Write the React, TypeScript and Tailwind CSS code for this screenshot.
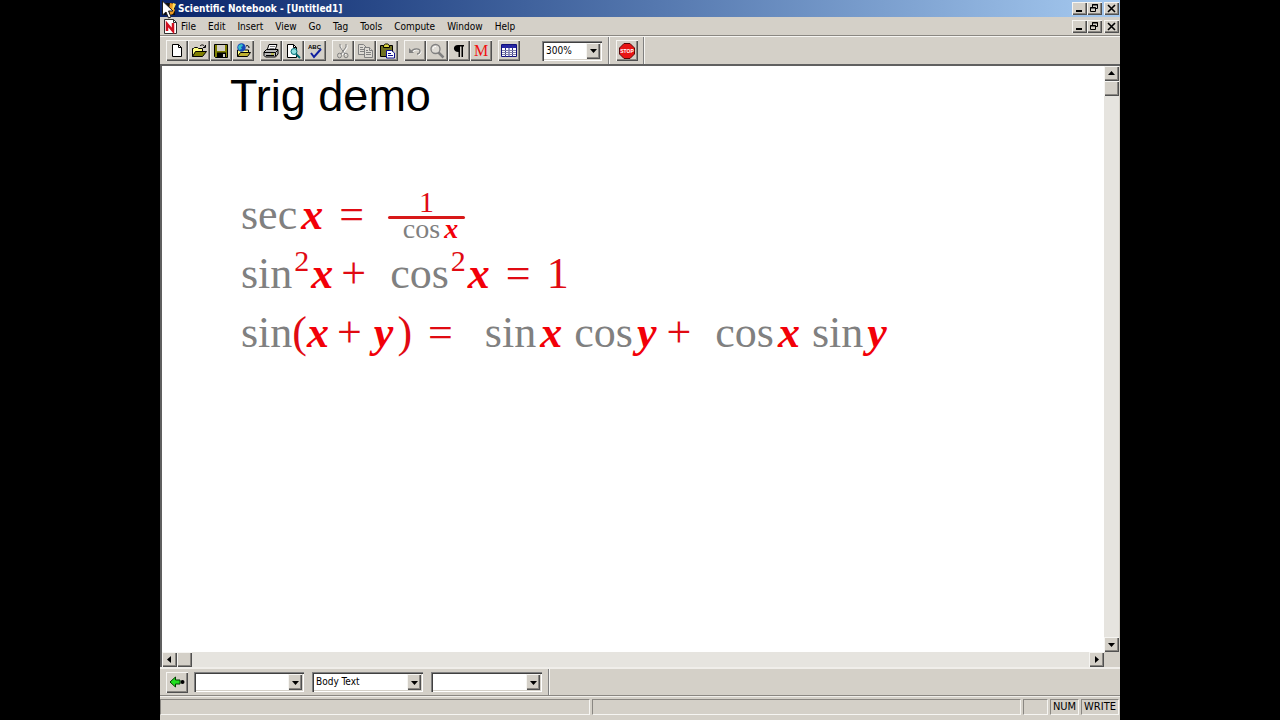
import type { ReactNode } from "react";

const raised =
  "bg-[#d4d0c8] shadow-[inset_1px_1px_0_#f6f5f2,inset_-1px_-1px_0_#505050,inset_-2px_-2px_0_#8a8782]";

const menus = ["File", "Edit", "Insert", "View", "Go", "Tag", "Tools", "Compute", "Window", "Help"];

function Icon({ children }: { children: ReactNode }) {
  return (
    <svg viewBox="0 0 16 16" className="h-4 w-4" aria-hidden="true">
      {children}
    </svg>
  );
}

function ToolButton({ label, children }: { label: string; children: ReactNode }) {
  return (
    <button aria-label={label} className={`flex h-[21px] w-[22px] items-center justify-center ${raised}`}>
      {children}
    </button>
  );
}

function Arrow({ dir }: { dir: "up" | "down" | "left" | "right" }) {
  const points = {
    up: "1,6 8,6 4.5,2",
    down: "1,3 8,3 4.5,7",
    left: "6,1 6,8 2,4.5",
    right: "3,1 3,8 7,4.5",
  };
  return (
    <svg viewBox="0 0 9 9" className="h-[9px] w-[9px]" aria-hidden="true">
      <polygon points={points[dir]} />
    </svg>
  );
}

function ScrollButton({ label, dir }: { label: string; dir: "up" | "down" | "left" | "right" }) {
  return (
    <button aria-label={label} className={`flex h-[15px] w-[15px] shrink-0 items-center justify-center ${raised}`}>
      <Arrow dir={dir} />
    </button>
  );
}

function Combo({ label, value, width }: { label: string; value: string; width: string }) {
  return (
    <div
      className={`relative flex h-5 items-center bg-white ${width} shadow-[inset_1px_1px_0_#808080,inset_2px_2px_0_#404040,inset_-1px_-1px_0_#fff,inset_-2px_-2px_0_#d4d0c8]`}
    >
      <select aria-label={label} className="h-full w-full appearance-none bg-transparent pl-1 outline-none">
        <option>{value}</option>
      </select>
      <span className={`pointer-events-none absolute right-[2px] flex h-4 w-[14px] items-center justify-center ${raised}`}>
        <Arrow dir="down" />
      </span>
    </div>
  );
}

function WindowButtons() {
  const box = `flex h-[13px] w-[15px] items-center justify-center ${raised}`;
  return (
    <div className="ml-auto flex pr-px">
      <button aria-label="Minimize" className={box}>
        <svg viewBox="0 0 11 9" className="h-[9px] w-[11px]">
          <path d="M2 6h6v2H2z" />
        </svg>
      </button>
      <button aria-label="Restore" className={box}>
        <svg viewBox="0 0 11 9" className="h-[9px] w-[11px]" fill="none" stroke="#000">
          <path d="M3.5 3V.5h5v4H7M3 1h6M1.5 3.5h5v4h-5zM1 4h6" />
        </svg>
      </button>
      <button aria-label="Close" className={`ml-[2px] ${box}`}>
        <svg viewBox="0 0 11 9" className="h-[9px] w-[11px]" stroke="#000" strokeWidth="1.6">
          <path d="M2 1l7 7M9 1L2 8" />
        </svg>
      </button>
    </div>
  );
}

function Divider() {
  return <div className="w-[2px] self-stretch border-l border-[#808080] bg-[#f6f5f2]" />;
}

function Toolbar() {
  return (
    <div className="flex h-[28px] items-center border-t border-[#f6f5f2] pl-[6px]">
      <div className="flex">
        <ToolButton label="New">
          <Icon>
            <path d="M3.5 1.5h6l3 3v9h-9z" fill="#fff" stroke="#000" />
            <path d="M9.5 1.5v3h3" fill="none" stroke="#000" />
          </Icon>
        </ToolButton>
        <ToolButton label="Open">
          <Icon>
            <path d="M1.5 13.5v-8h1l1-1h3l1 1h4v3" fill="#ffff80" stroke="#000" />
            <path d="M1.5 13.5l3-5h11l-4 5z" fill="#808000" stroke="#000" />
            <path d="M9 3c2-2 4-1 5 1M14.5 2v2.5H12" fill="none" stroke="#000" />
          </Icon>
        </ToolButton>
        <ToolButton label="Save">
          <Icon>
            <path d="M1.5 1.5h13v13h-12l-1-1z" fill="#808000" stroke="#000" />
            <path d="M4 2h8v6H4z" fill="#d4d0c8" />
            <path d="M4 9.5h9V15H4z" />
            <path d="M10 11h2v3h-2z" fill="#d4d0c8" />
          </Icon>
        </ToolButton>
        <ToolButton label="Open from web">
          <Icon>
            <path d="M2.5 13.5V7h2l1-1h3l1 1h4v2" fill="#ffff80" stroke="#000" />
            <circle cx="6.5" cy="4.5" r="4.2" fill="#1747b8" />
            <path d="M4 2l3-1 1 2-2 1 1 2-3 1-1-3z" fill="#35c0c8" />
            <path d="M2.5 13.5l3-4h10l-3 4z" fill="#c0b030" stroke="#000" />
            <path d="M11 3c2-1 3 0 3 2" fill="none" stroke="#000" />
          </Icon>
        </ToolButton>
      </div>

      <div className="ml-[6px] flex">
        <ToolButton label="Print">
          <Icon>
            <path d="M4 7.5l2-6h8l-2 6z" fill="#fff" stroke="#000" />
            <path d="M7 3.5h5M6.5 5.5h5" stroke="#808080" />
            <path d="M1 9l2.5-2.500H15V11l-2.500 3H2.500L1 12.500z" fill="#b8b8b8" stroke="#000" />
            <path d="M1 9.5h11.500V13M12.500 9.500L15 7" fill="none" stroke="#000" />
            <path d="M3 12.500h8" stroke="#000" />
            <path d="M8 11h3" stroke="#c0c000" />
          </Icon>
        </ToolButton>
        <ToolButton label="Preview">
          <Icon>
            <path d="M2.5 1.5h6l3 3v10h-9z" fill="#fff" stroke="#000" />
            <path d="M8.5 1.5v3h3" fill="none" stroke="#000" />
            <circle cx="9" cy="8.5" r="3" fill="#8fe0e0" stroke="#006a70" />
            <path d="M11 11l4 4" stroke="#006a70" strokeWidth="2" />
          </Icon>
        </ToolButton>
        <ToolButton label="Spelling">
          <Icon>
            <text x="1" y="6" fontSize="6" fontWeight="bold" fontFamily="Liberation Sans, sans-serif">
              ABC
            </text>
            <path d="M4 10l3 4 7-8" fill="none" stroke="#1020a0" strokeWidth="2" />
          </Icon>
        </ToolButton>
      </div>

      <div className="ml-[6px] flex">
        <ToolButton label="Cut">
          <Icon>
            <path d="M5 1v3l5 7M11 1v3l-5 7" fill="none" stroke="#fff" transform="translate(1 1)" />
            <g fill="none" stroke="#808080">
              <path d="M5 1v3l5 7M11 1v3l-5 7" />
              <ellipse cx="4.5" cy="12.5" rx="2" ry="2.3" />
              <ellipse cx="11" cy="12.5" rx="2" ry="2.3" />
            </g>
          </Icon>
        </ToolButton>
        <ToolButton label="Copy">
          <Icon>
            <g fill="#dedbd5" stroke="#808080">
              <path d="M1.5 1.5h5l3 3v7h-8z" />
              <path d="M3 4.5h3M3 6.5h4M3 8.5h4" />
              <path d="M7.5 4.5h5l3 3v7h-8z" />
              <path d="M12.5 4.5v3h3M9 7.5h2M9 9.5h5M9 11.5h5" />
            </g>
          </Icon>
        </ToolButton>
        <ToolButton label="Paste">
          <Icon>
            <path d="M1.5 2.5h12v11h-12z" fill="#707020" stroke="#000" />
            <path d="M4.5 4.5v-2l2-1.5h2l2 1.5v2z" fill="#e0d840" stroke="#000" />
            <path d="M7.5 7.5h5l3 2.5v5h-8z" fill="#fff" stroke="#101090" />
            <path d="M9 10.5h3M9 12.5h5" stroke="#101090" />
          </Icon>
        </ToolButton>
      </div>

      <div className="ml-[6px] flex">
        <ToolButton label="Undo">
          <Icon>
            <path d="M4 9c2-4 9-4 9-1 0 2-2 3-3 3" fill="none" stroke="#fff" transform="translate(1 1)" />
            <path d="M4 9c2-4 9-4 9-1 0 2-2 3-3 3" fill="none" stroke="#808080" strokeWidth="1.3" />
            <path d="M2 5v5h5z" fill="#808080" />
          </Icon>
        </ToolButton>
        <ToolButton label="Zoom">
          <Icon>
            <circle cx="6.5" cy="6" r="4.5" fill="#dedbd5" stroke="#808080" strokeWidth="1.3" />
            <path d="M4 6c0-2 1-2.5 3-2.5" fill="none" stroke="#fff" />
            <path d="M9.5 9.5l5 5" stroke="#808080" strokeWidth="2.5" />
          </Icon>
        </ToolButton>
        <ToolButton label="Show nonprinting">
          <Icon>
            <path d="M7 2h6v1.5h-1V14h-1.500V3.500H9V14H7.500V9C1.500 9 1.500 2 7 2z" />
          </Icon>
        </ToolButton>
        <ToolButton label="Toggle math/text">
          <span className="font-['Liberation_Serif',serif] text-[16px] leading-4 text-[#f01010]">M</span>
        </ToolButton>
      </div>

      <div className="ml-[6px] flex">
        <ToolButton label="Table">
          <Icon>
            <path d="M.5 1.5h15v12H.5z" fill="#fff" stroke="#10107a" />
            <path d="M1 2h14v3H1z" fill="#2424a8" />
            <path d="M4.5 2v12M8 2v12M11.5 2v12" stroke="#303090" />
            <path d="M1 7.5h14M1 9.5h14M1 11.5h14" stroke="#8080a8" />
          </Icon>
        </ToolButton>
      </div>

      <div className="mr-[6px] ml-[22px]">
        <Combo label="Zoom" value="300%" width="w-[60px]" />
      </div>
      <Divider />
      <div className="mr-[5px] ml-[6px]">
        <ToolButton label="Stop">
          <Icon>
            <path d="M5 .5h6L15.5 5v6L11 15.5H5L.5 11V5z" fill="#e81414" stroke="#5a0808" />
            <text
              x="8"
              y="10"
              fontSize="5"
              fontWeight="bold"
              textAnchor="middle"
              fill="#fff"
              fontFamily="Liberation Sans, sans-serif"
            >
              STOP
            </text>
          </Icon>
        </ToolButton>
      </div>
      <Divider />
    </div>
  );
}

/* Red italic variable */
function V({ children, gap = "ml-1" }: { children: string; gap?: string }) {
  return <i className={`font-bold text-[#f20008] ${gap}`}>{children}</i>;
}

/* Gray function name */
function Fn({ children, gap = "" }: { children: string; gap?: string }) {
  return <span className={`text-[#808080] ${gap}`}>{children}</span>;
}

function Op({ children, gap = "ml-4" }: { children: string; gap?: string }) {
  return <span className={gap}>{children}</span>;
}

function Sq() {
  return <sup className="top-0 ml-[2px] align-[17px] text-[30px] leading-none">2</sup>;
}

function Document() {
  return (
    <main className="min-w-0 flex-1 overflow-hidden bg-white pl-[68px]">
      <h1 className="pt-1 font-['Liberation_Sans',sans-serif] text-[45px] leading-[52px] text-black">Trig demo</h1>
      <div className="mt-16 pl-[11px] font-['Liberation_Serif',serif] text-[44px] leading-[58px] whitespace-nowrap text-[#e00a12]">
        <p className="h-[59px]">
          <Fn>sec</Fn>
          <V>x</V>
          <Op>=</Op>
          <span className="ml-6 inline-flex w-[77px] flex-col items-center align-[17px]">
            <span className="text-[30px] leading-7">1</span>
            <span className="h-[3px] w-full rounded-full bg-[#d81818]" />
            <span className="text-[28px] leading-5">
              <Fn gap="ml-2">cos</Fn>
              <V>x</V>
            </span>
          </span>
        </p>
        <p className="h-[59px]">
          <Fn>sin</Fn>
          <Sq />
          <V gap="ml-[2px]">x</V>
          <Op gap="ml-2">+</Op>
          <Fn gap="ml-6">cos</Fn>
          <Sq />
          <V gap="ml-[2px]">x</V>
          <Op>=</Op>
          <Op>1</Op>
        </p>
        <p className="h-[59px]">
          <Fn>sin</Fn>
          <Op gap="">(</Op>
          <V gap="">x</V>
          <Op gap="ml-2">+</Op>
          <V gap="ml-3">y</V>
          <Op gap="ml-1">)</Op>
          <Op>=</Op>
          <Fn gap="ml-8">sin</Fn>
          <V>x</V>
          <Fn gap="ml-3">cos</Fn>
          <V>y</V>
          <Op gap="ml-[10px]">+</Op>
          <Fn gap="ml-6">cos</Fn>
          <V>x</V>
          <Fn gap="ml-3">sin</Fn>
          <V>y</V>
        </p>
      </div>
    </main>
  );
}

function Pane({ children, size }: { children?: string; size: string }) {
  return (
    <div
      className={`flex h-4 items-center justify-center border border-[#f6f5f2] border-t-[#8a8782] border-l-[#8a8782] text-[11px] ${size}`}
    >
      {children}
    </div>
  );
}

export default function App() {
  return (
    <div className="h-screen overflow-hidden bg-black">
      <div className="relative mx-auto flex aspect-[4/3] h-full flex-col bg-[#d4d0c8] font-['DejaVu_Sans_Condensed','DejaVu_Sans',sans-serif] text-[10px] leading-3 text-black">
        <header className="flex h-[17px] items-center bg-linear-to-r from-[#0a246a] to-[#a6caf0] pl-[3px]">
          <svg viewBox="0 0 14 14" className="h-[14px] w-[14px]" aria-hidden="true">
            <path d="M1 1h11v12H1z" fill="#101010" />
            <path d="M7 1l5 1-2 4 2 2-2 4-3 1-1-6z" fill="#f09a20" />
            <path d="M10 1l3 1-4 9z" fill="#ffe060" />
          </svg>
          <span className="pl-px font-bold text-white">Scientific Notebook - [Untitled1]</span>
          <WindowButtons />
        </header>

        <nav className="flex h-[19px] items-center border-b border-[#8a8782] pl-[4px]">
          <svg viewBox="0 0 13 15" className="h-[15px] w-[13px]" aria-hidden="true">
            <path d="M.5.5h9l3 3v11H.5z" fill="#fff" stroke="#303030" />
            <path d="M9.5.5v3h3" fill="none" stroke="#303030" />
            <path d="M3 12V5l6 7V4" fill="none" stroke="#d01020" strokeWidth="2.5" />
          </svg>
          <div className="flex gap-3 pt-[2px] pl-1">
            {menus.map((m) => (
              <button key={m}>{m}</button>
            ))}
          </div>
          <WindowButtons />
        </nav>

        <Toolbar />

        <div className="flex min-h-0 flex-1 border-t-2 border-l-2 border-[#606060] pr-px">
          <div className="flex min-w-0 flex-1 flex-col">
            <Document />
            <div className="flex h-[15px] bg-[#e6e4df]">
              <ScrollButton label="Scroll left" dir="left" />
              <div className={`h-[15px] w-[15px] ${raised}`} />
              <div className="flex-1" />
              <ScrollButton label="Scroll right" dir="right" />
            </div>
          </div>
          <div className="flex w-[15px] flex-col">
            <div className="flex flex-1 flex-col bg-[#e6e4df]">
              <ScrollButton label="Scroll up" dir="up" />
              <div className={`h-[15px] w-[15px] ${raised}`} />
              <div className="flex-1" />
              <ScrollButton label="Scroll down" dir="down" />
            </div>
            <div className="h-[15px]" />
          </div>
        </div>

        <div className="flex h-[29px] items-center border-t-2 border-b border-t-[#f0eeea] border-b-[#8a8782] pl-[6px]">
          <ToolButton label="Remove tag">
            <Icon>
              <path d="M1 8l5.500-5v3H11v4H6.500v3z" fill="#20e020" stroke="#004000" />
              <circle cx="13.5" cy="8" r="2" />
            </Icon>
          </ToolButton>
          <div className="flex gap-2 pr-[6px] pl-[6px]">
            <Combo label="Item tag" value="" width="w-[110px]" />
            <Combo label="Section tag" value="Body Text" width="w-[111px]" />
            <Combo label="Text tag" value="" width="w-[111px]" />
          </div>
          <Divider />
        </div>

        <footer className="flex h-[24px] gap-[2px] border-t border-[#f0eeea] pt-[2px] pr-px">
          <Pane size="flex-1" />
          <Pane size="flex-1" />
          <Pane size="w-[25px]" />
          <Pane size="w-[29px]">NUM</Pane>
          <Pane size="w-[38px]">WRITE</Pane>
        </footer>

        {/* Mouse pointer */}
        <svg viewBox="0 0 12 20" className="absolute top-0 left-[2px] h-5 w-3" aria-hidden="true">
          <path d="M.5 1v14l3.500-3 2.500 6 2.500-1-2.500-6h4.500z" fill="#fff" stroke="#202020" />
        </svg>
      </div>
    </div>
  );
}
